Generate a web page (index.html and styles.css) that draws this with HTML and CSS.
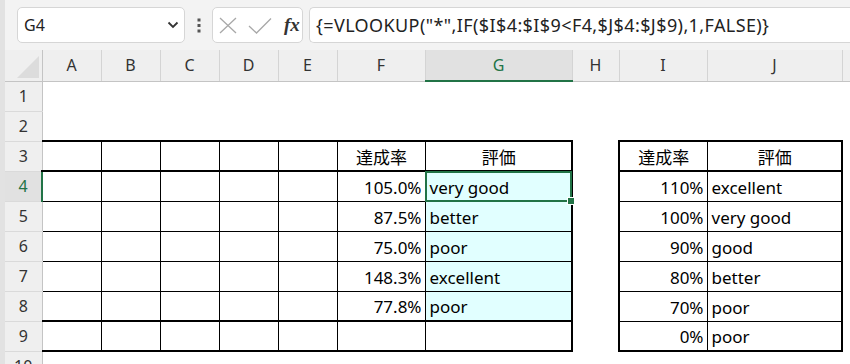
FILE: index.html
```html
<!DOCTYPE html>
<html lang="ja">
<head>
  <meta charset="UTF-8">
  <meta name="viewport" content="width=device-width, initial-scale=1.0">
  <title>VLOOKUP 評価</title>
  <link rel="stylesheet" href="styles.css">
</head>
<body>
  <div class="app">
    <div class="formula-bar">
      <div class="name-box">
        <span>G4</span>
        <svg width="12" height="8" viewBox="0 0 12 8"><path d="M1.5 1.5 L6 6 L10.5 1.5" fill="none" stroke="#333" stroke-width="1.8"/></svg>
      </div>
      <div class="grip">
        <svg width="4" height="15" viewBox="0 0 4 15"><rect x="0.5" y="0.5" width="3" height="3" fill="#555"/><rect x="0.5" y="6" width="3" height="3" fill="#555"/><rect x="0.5" y="11.5" width="3" height="3" fill="#555"/></svg>
      </div>
      <div class="fx-box">
        <svg width="18" height="17" viewBox="0 0 18 17"><path d="M1 1 L17 16 M17 1 L1 16" stroke="#a8a8a8" stroke-width="1.3" fill="none"/></svg>
        <svg width="24" height="17" viewBox="0 0 24 17"><path d="M1 9 L8.5 16 L23 1.5" stroke="#a8a8a8" stroke-width="1.3" fill="none"/></svg>
        <span class="fx">fx</span>
      </div>
      <div class="formula">{=VLOOKUP("*",IF($I$4:$I$9&lt;F4,$J$4:$J$9),1,FALSE)}</div>
    </div>

    <div class="sheet">
      <table class="grid">
        <colgroup>
          <col class="w-rh">
          <col class="w-a"><col class="w-a"><col class="w-a"><col class="w-a"><col class="w-a">
          <col class="w-f"><col class="w-g"><col class="w-h"><col class="w-i"><col class="w-j"><col class="w-k">
        </colgroup>
        <thead>
          <tr>
            <th class="corner"><span class="tri"></span></th>
            <th>A</th><th>B</th><th>C</th><th>D</th><th>E</th><th>F</th>
            <th class="cur-col">G</th>
            <th>H</th><th>I</th><th>J</th><th></th>
          </tr>
        </thead>
        <tbody>
          <tr>
            <th class="rh">1</th>
            <td></td><td></td><td></td><td></td><td></td><td></td><td></td><td></td><td></td><td></td><td></td>
          </tr>
          <tr>
            <th class="rh">2</th>
            <td></td><td></td><td></td><td></td><td></td><td></td><td></td><td></td><td></td><td></td><td></td>
          </tr>
          <tr>
            <th class="rh">3</th>
            <td class="box thick-t thick-b"></td>
            <td class="box thick-t thick-b"></td>
            <td class="box thick-t thick-b"></td>
            <td class="box thick-t thick-b"></td>
            <td class="box thick-t thick-b"></td>
            <td class="box thick-t thick-b ctr">達成率</td>
            <td class="box thick-t thick-b thick-r ctr">評価</td>
            <td></td>
            <td class="box thick-t thick-b thick-l ctr">達成率</td>
            <td class="box thick-t thick-b thick-r ctr">評価</td>
            <td></td>
          </tr>
          <tr>
            <th class="rh cur-row">4</th>
            <td class="box"></td><td class="box"></td><td class="box"></td><td class="box"></td><td class="box"></td>
            <td class="box num">105.0%</td>
            <td class="box thick-r hi active">very good<span class="sel"></span></td>
            <td></td>
            <td class="box thick-l num">110%</td>
            <td class="box thick-r">excellent</td>
            <td></td>
          </tr>
          <tr>
            <th class="rh">5</th>
            <td class="box"></td><td class="box"></td><td class="box"></td><td class="box"></td><td class="box"></td>
            <td class="box num">87.5%</td>
            <td class="box thick-r hi">better</td>
            <td></td>
            <td class="box thick-l num">100%</td>
            <td class="box thick-r">very good</td>
            <td></td>
          </tr>
          <tr>
            <th class="rh">6</th>
            <td class="box"></td><td class="box"></td><td class="box"></td><td class="box"></td><td class="box"></td>
            <td class="box num">75.0%</td>
            <td class="box thick-r hi">poor</td>
            <td></td>
            <td class="box thick-l num">90%</td>
            <td class="box thick-r">good</td>
            <td></td>
          </tr>
          <tr>
            <th class="rh">7</th>
            <td class="box"></td><td class="box"></td><td class="box"></td><td class="box"></td><td class="box"></td>
            <td class="box num">148.3%</td>
            <td class="box thick-r hi">excellent</td>
            <td></td>
            <td class="box thick-l num">80%</td>
            <td class="box thick-r">better</td>
            <td></td>
          </tr>
          <tr>
            <th class="rh">8</th>
            <td class="box"></td><td class="box"></td><td class="box"></td><td class="box"></td><td class="box"></td>
            <td class="box num">77.8%</td>
            <td class="box thick-r hi">poor</td>
            <td></td>
            <td class="box thick-l num">70%</td>
            <td class="box thick-r">poor</td>
            <td></td>
          </tr>
          <tr>
            <th class="rh">9</th>
            <td class="box thick-t thick-b"></td>
            <td class="box thick-t thick-b"></td>
            <td class="box thick-t thick-b"></td>
            <td class="box thick-t thick-b"></td>
            <td class="box thick-t thick-b"></td>
            <td class="box thick-t thick-b"></td>
            <td class="box thick-t thick-b thick-r"></td>
            <td></td>
            <td class="box thick-b thick-l num">0%</td>
            <td class="box thick-b thick-r">poor</td>
            <td></td>
          </tr>
          <tr>
            <th class="rh">10</th>
            <td></td><td></td><td></td><td></td><td></td><td></td><td></td><td></td><td></td><td></td><td></td>
          </tr>
        </tbody>
      </table>
    </div>
  </div>
</body>
</html>
```

FILE: styles.css
```css
* {
  box-sizing: border-box;
}
body {
  margin: 0;
  background: #f3f3f3;
  font-family: "Noto Sans", "Noto Sans CJK JP", sans-serif;
  overflow: hidden;
}
.app {
  height: 364px;
  border-left: 5px solid #e2e2e2;
  overflow: hidden;
}

/* formula bar */
.formula-bar {
  display: flex;
  align-items: flex-start;
  height: 50px;
  padding: 7px 0 0 12px;
}
.formula-bar > * {
  flex-shrink: 0;
}
.name-box {
  width: 168px;
  height: 36px;
  background: #fff;
  border: 1px solid #d6d6d6;
  border-radius: 5px;
  display: flex;
  align-items: center;
  justify-content: space-between;
  padding: 0 5px 0 6px;
  font-size: 16px;
  color: #222;
}
.grip {
  width: 27px;
  height: 36px;
  display: flex;
  align-items: center;
  justify-content: center;
}
.fx-box {
  width: 91px;
  height: 36px;
  background: #fff;
  border: 1px solid #d6d6d6;
  border-radius: 5px;
  display: flex;
  align-items: center;
  gap: 11px;
  padding-left: 6px;
}
.fx {
  font-family: "Liberation Serif", serif;
  font-style: italic;
  font-weight: bold;
  font-size: 19px;
  color: #333;
  margin-left: 1px;
}
.formula {
  width: 560px;
  height: 36px;
  margin-left: 6px;
  background: #fff;
  border: 1px solid #d6d6d6;
  border-right: none;
  border-radius: 5px 0 0 5px;
  padding-left: 6px;
  display: flex;
  align-items: center;
  font-size: 18px;
  letter-spacing: 0.4px;
  color: #222;
  white-space: nowrap;
}

/* sheet */
.sheet {
  overflow: hidden;
}
.grid {
  border-collapse: collapse;
  table-layout: fixed;
  width: 912px;
}
.w-rh { width: 37px; }
.w-a { width: 59px; }
.w-f { width: 88px; }
.w-g { width: 147px; }
.w-h { width: 47px; }
.w-i { width: 88px; }
.w-j { width: 135px; }
.w-k { width: 75px; }

.grid th {
  font-weight: normal;
  background: #efefef;
  color: #333;
  font-size: 16px;
  padding: 0;
}
.grid thead th {
  height: 31px;
  border-right: 1px solid #d4d4d4;
  border-bottom: 1px solid #c4c4c4;
}
.grid thead th.corner {
  position: relative;
  border-right: 1px solid #c4c4c4;
}
.tri {
  position: absolute;
  right: 3px;
  bottom: 3px;
  width: 0;
  height: 0;
  border-left: 22px solid transparent;
  border-bottom: 22px solid #dcdcdc;
}
.grid thead th.cur-col {
  background: #e1e1e1;
  color: #217346;
  border-bottom: 2px solid #217346;
}
.grid th.rh {
  height: 30px;
  border-right: 1px solid #c4c4c4;
  border-bottom: 1px solid #dadada;
}
.grid th.cur-row {
  background: #e1e1e1;
  color: #217346;
  border-right: 2px solid #217346;
}
.grid tr {
  height: 30px;
}
.grid td {
  background: #fff;
  font-size: 17px;
  line-height: 1;
  color: #000;
  padding: 2px 3px 0 4px;
  white-space: nowrap;
  overflow: hidden;
  vertical-align: middle;
}

/* borders of the two tables */
.box {
  border-top: 1px solid #000;
  border-bottom: 1px solid #000;
  border-right: 1px solid #000;
}
.thick-t { border-top-width: 2px; }
.thick-b { border-bottom-width: 2px; }
.thick-r { border-right-width: 2px; }
.thick-l { border-left: 2px solid #000; }
.num { text-align: right; }
.ctr { text-align: center; }
.grid td.hi { background: #e1ffff; }

.grid td.active {
  position: relative;
  overflow: visible;
}
.sel {
  position: absolute;
  top: -1px;
  left: -1px;
  right: -1px;
  bottom: -1px;
  border: 2px solid #217346;
}
.sel::after {
  content: "";
  position: absolute;
  right: -5px;
  bottom: -5px;
  width: 6px;
  height: 6px;
  background: #217346;
  border: 1px solid #fff;
}
```
